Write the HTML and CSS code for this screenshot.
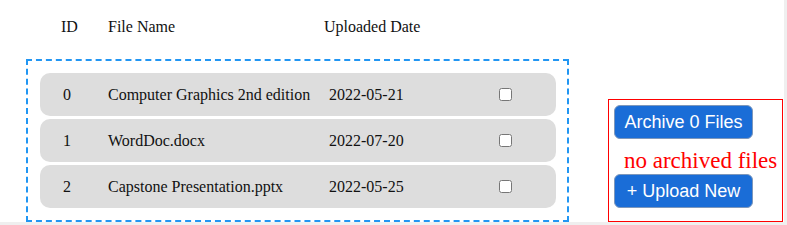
FILE: index.html
```html
<!DOCTYPE html>
<html lang="en">
<head>
    <meta charset="UTF-8">
    <meta name="viewport" content="width=device-width, initial-scale=1.0">
    <title>File Archive</title>
    <link rel="stylesheet" href="styles.css">
</head>
<body>
    <div class="page">
        <div class="files">
            <div class="file-head">
                <div>ID</div>
                <div>File Name</div>
                <div>Uploaded Date</div>
            </div>
            <div class="drop-zone">
                <ul class="file-list" id="fileList"></ul>
            </div>
        </div>

        <div class="archive-panel">
            <button class="btn" id="archiveBtn">Archive 0 Files</button>
            <p class="archive-msg" id="archiveMsg">no archived files</p>
            <button class="btn">+ Upload New</button>
        </div>
    </div>

    <script>
        let files = [
            { name: 'Computer Graphics 2nd edition', date: '2022-05-21' },
            { name: 'WordDoc.docx', date: '2022-07-20' },
            { name: 'Capstone Presentation.pptx', date: '2022-05-25' }
        ];

        function updateCount() {
            const checked = document.querySelectorAll('.file-item input:checked').length;
            document.getElementById('archiveBtn').textContent = `Archive ${checked} Files`;
        }

        function renderFiles() {
            const list = document.getElementById('fileList');
            list.innerHTML = '';

            files.forEach((file, index) => {
                const item = document.createElement('li');
                item.className = 'file-item';
                item.innerHTML = `
                    <div class="file-id">${index}</div>
                    <div>${file.name}</div>
                    <div>${file.date}</div>
                    <div><input type="checkbox" onchange="updateCount()"></div>
                `;
                list.appendChild(item);
            });
        }

        renderFiles();
    </script>
</body>
</html>
```

FILE: styles.css
```css
body {
    margin: 0;
    background-color: #efefef;
    font-family: 'Liberation Serif', 'Times New Roman', serif;
    font-size: 16px;
    color: #111;
}
.page {
    display: flex;
    align-items: flex-start;
    width: 784px;
    height: 222px;
    background: #fff;
}
.files {
    width: 582px;
    padding-left: 26px;
}
.file-head {
    display: grid;
    grid-template-columns: 47px 216px auto;
    padding: 18px 0 0 35px;
}
.drop-zone {
    width: 539px;
    margin-top: 23px;
    border: 2px dashed #2196f3;
}
.file-list {
    list-style-type: none;
    margin: 12px 11px 12px 12px;
    padding: 0;
    display: flex;
    flex-direction: column;
    gap: 3px;
}
.file-item {
    display: grid;
    grid-template-columns: 68px 221px 166px auto;
    align-items: center;
    height: 43px;
    background: #dddddd;
    border-radius: 10px;
}
.file-id {
    text-align: center;
    padding-right: 14px;
}
.file-item input {
    margin: 0 0 0 4px;
    width: 13px;
    height: 13px;
    display: block;
}
.archive-panel {
    box-sizing: border-box;
    margin-top: 99px;
    width: 175px;
    height: 123px;
    padding: 5px;
    border: 1px solid #f00;
}
.btn {
    display: block;
    width: 139px;
    height: 34px;
    padding: 0;
    background-color: #1a6dd7;
    color: #fff;
    border: 1px solid #7d97bb;
    border-radius: 6px;
    font-family: 'Liberation Sans', Arial, sans-serif;
    font-size: 18px;
    cursor: pointer;
}
.btn:hover {
    background-color: #155cb8;
}
.archive-msg {
    margin: 9px 0 0 10px;
    color: #f00;
    font-size: 23px;
    line-height: 26px;
    white-space: nowrap;
}
```
